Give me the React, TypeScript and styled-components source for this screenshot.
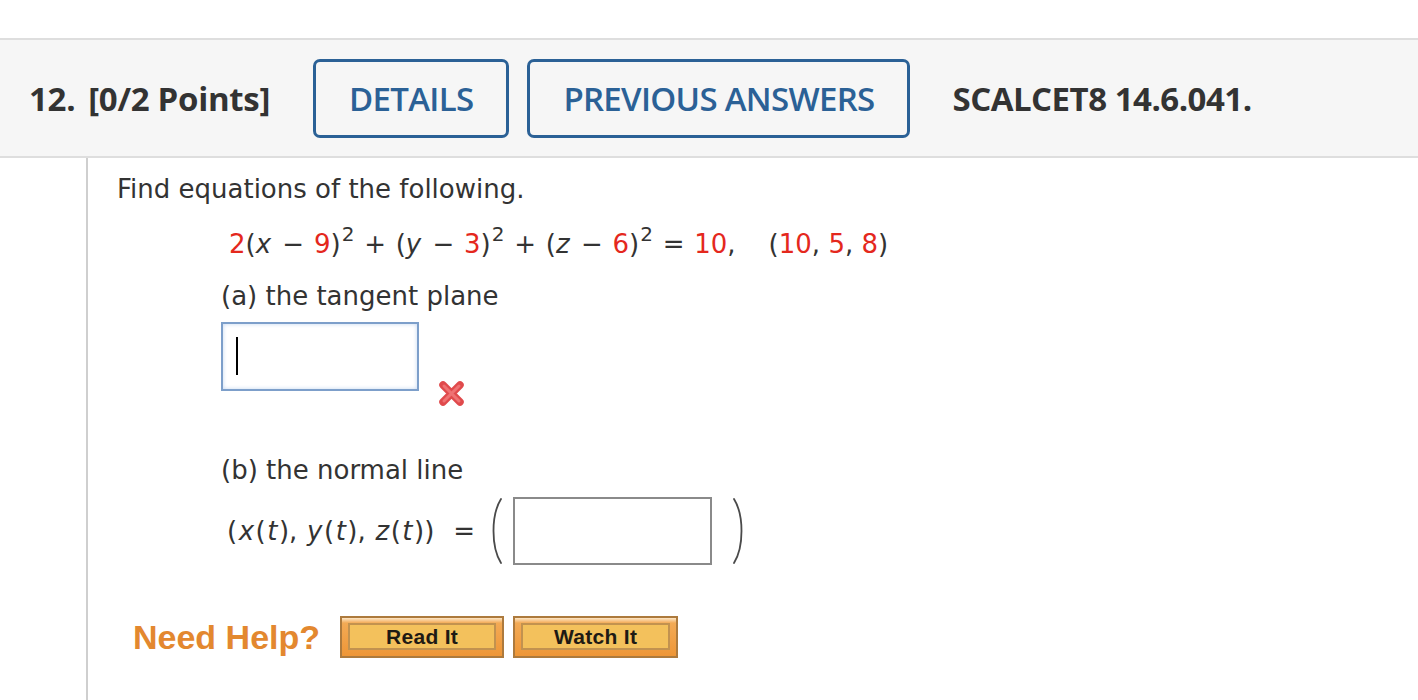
import React from "react"
import styled, { createGlobalStyle } from "styled-components"

const GlobalStyle = createGlobalStyle`
  html, body {
    margin: 0;
    padding: 0;
    background: #fff;
  }
  body {
    font-family: "DejaVu Sans", Verdana, sans-serif;
    color: #333;
  }
`

const Page = styled.div`
  padding-top: 38px;
  height: 700px;
  box-sizing: border-box;
  display: flex;
  flex-direction: column;
  overflow: hidden;
`

// Question header band
const Header = styled.div`
  flex: none;
  height: 116px;
  border-top: 2px solid #dedede;
  border-bottom: 2px solid #dedede;
  background: #f6f6f6;
  display: flex;
  align-items: center;
  padding-left: 29px;
  font-family: "Open Sans", "Liberation Sans", sans-serif;
  font-weight: 700;
  color: #333;
`

const QuestionLabel = styled.div`
  display: flex;
  gap: 13px;
  font-size: 33px;
  letter-spacing: -0.3px;
  margin-right: 43px;
`

const OutlineButton = styled.button`
  height: 79px;
  padding: 0 33px;
  margin-right: 18px;
  border: 3px solid #2b6196;
  border-radius: 7px;
  background: transparent;
  color: #2b6196;
  font-family: inherit;
  font-weight: 600;
  font-size: 33px;
  letter-spacing: -0.7px;
  cursor: pointer;
`

const ProblemCode = styled.div`
  margin-left: 24px;
  font-size: 33px;
  letter-spacing: -0.5px;
`

// Question body
const Body = styled.div`
  flex: 1;
  margin-left: 86px;
  border-left: 2px solid #cfcfcf;
  padding: 16px 0 0 29px;
  font-size: 26px;
  line-height: 30px;
`

const Line = styled.div<{ $indent?: number; $top?: number }>`
  margin-left: ${(p) => p.$indent ?? 0}px;
  margin-top: ${(p) => p.$top ?? 0}px;
  white-space: pre;
`

const Red = styled.span`
  color: #e4281d;
`

const Var = styled.i`
  font-style: italic;
  margin-right: 1.5px;
`

const Op = styled.span`
  margin: 0 1.5px;
`

const Sup = styled.sup`
  font-size: 20px;
  line-height: 0;
  vertical-align: 12px;
  margin-left: 1px;
`

const Spacer = styled.span`
  display: inline-block;
  width: ${(p: { $w: number }) => p.$w}px;
`

const AnswerRow = styled.div<{ $indent: number; $top: number }>`
  display: flex;
  align-items: flex-start;
  margin-left: ${(p) => p.$indent}px;
  margin-top: ${(p) => p.$top}px;
`

const FocusedBox = styled.div`
  width: 198px;
  height: 69px;
  box-sizing: border-box;
  border: 2px solid #7d9fca;
  box-shadow: inset 0 0 4px #c3d6f0;
  background: #fff;
  padding: 13px 0 0 13px;
`

const Caret = styled.div`
  width: 2px;
  height: 38px;
  background: #000;
`

const WrongMark = styled.svg`
  margin: 58px 0 0 19px;
  flex: none;
`

const FormulaRow = styled.div`
  display: flex;
  align-items: center;
  margin-left: 110px;
  margin-top: 12px;
`

const FormulaVar = styled.i`
  font-style: italic;
  margin: 0 1.5px;
`

const Equals = styled.span`
  margin-left: 19px;
  margin-right: 14px;
`

const AnswerBox = styled.div`
  width: 199px;
  height: 68px;
  box-sizing: border-box;
  border: 2px solid #8a8a8a;
  background: #fff;
  margin: 0 20px 0 10px;
`

const HelpRow = styled.div`
  display: flex;
  align-items: center;
  margin: 51px 0 0 16px;
`

const NeedHelp = styled.span`
  font-family: "Liberation Sans", Arial, sans-serif;
  font-weight: 700;
  font-size: 34px;
  color: #e3882f;
  margin-right: 20px;
`

const HelpButton = styled.button`
  width: ${(p: { $w: number }) => p.$w}px;
  height: 42px;
  margin-right: 9px;
  padding: 5px 6px 6px;
  box-sizing: border-box;
  border: 2px solid #ad7a3d;
  background: linear-gradient(to bottom, #fde6c6 0px, #f3aa55 5px, #ee9637 100%);
  cursor: pointer;
`

const HelpInner = styled.span`
  display: flex;
  align-items: center;
  justify-content: center;
  height: 100%;
  box-sizing: border-box;
  border: 2px solid #c2924f;
  background: #f3c15c;
  font-family: "Liberation Sans", Arial, sans-serif;
  font-weight: 700;
  font-size: 21px;
  letter-spacing: 0.3px;
  color: #1e1a14;
`

const Paren = ({ flip }: { flip?: boolean }) => (
  <svg width="14" height="68" viewBox="0 0 14 68" style={{ transform: flip ? "scaleX(-1)" : undefined }}>
    <path d="M12 2 C 2 18, 2 50, 12 66" fill="none" stroke="#4a4a4a" strokeWidth="1.8" strokeLinecap="round" />
  </svg>
)

export default function App() {
  return (
    <>
      <GlobalStyle />
      <Page>
        <Header>
          <QuestionLabel>
            <span>12.</span>
            <span>[0/2 Points]</span>
          </QuestionLabel>
          <OutlineButton>DETAILS</OutlineButton>
          <OutlineButton>PREVIOUS ANSWERS</OutlineButton>
          <ProblemCode>SCALCET8 14.6.041.</ProblemCode>
        </Header>

        <Body>
          <Line>Find equations of the following.</Line>
          <Line $indent={112} $top={25}>
            <Red>2</Red>(<Var>x</Var> <Op>−</Op> <Red>9</Red>)<Sup>2</Sup> <Op>+</Op> (<Var>y</Var> <Op>−</Op>{" "}
            <Red>3</Red>)<Sup>2</Sup> <Op>+</Op> (<Var>z</Var> <Op>−</Op> <Red>6</Red>)<Sup>2</Sup> <Op>=</Op>{" "}
            <Red>10</Red>,<Spacer $w={33} />(<Red>10</Red>, <Red>5</Red>, <Red>8</Red>)
          </Line>
          <Line $indent={104} $top={22}>(a) the tangent plane</Line>
          <AnswerRow $indent={104} $top={11}>
            <FocusedBox role="textbox">
              <Caret />
            </FocusedBox>
            <WrongMark width="27" height="27" viewBox="0 0 27 27">
              <path d="M5 5 L22 22 M22 5 L5 22" stroke="#e04a4c" strokeWidth="7.5" strokeLinecap="round" />
              <path d="M6 6 L21 21 M21 6 L6 21" stroke="#ef7273" strokeWidth="3" strokeLinecap="round" />
            </WrongMark>
          </AnswerRow>
          <Line $indent={104} $top={48}>(b) the normal line</Line>
          <FormulaRow>
            <span>
              (<FormulaVar>x</FormulaVar>(<FormulaVar>t</FormulaVar>), <FormulaVar>y</FormulaVar>(
              <FormulaVar>t</FormulaVar>), <FormulaVar>z</FormulaVar>(<FormulaVar>t</FormulaVar>))
            </span>
            <Equals>=</Equals>
            <Paren />
            <AnswerBox role="textbox" />
            <Paren flip />
          </FormulaRow>
          <HelpRow>
            <NeedHelp>Need Help?</NeedHelp>
            <HelpButton $w={164}>
              <HelpInner>Read It</HelpInner>
            </HelpButton>
            <HelpButton $w={165}>
              <HelpInner>Watch It</HelpInner>
            </HelpButton>
          </HelpRow>
        </Body>
      </Page>
    </>
  )
}
